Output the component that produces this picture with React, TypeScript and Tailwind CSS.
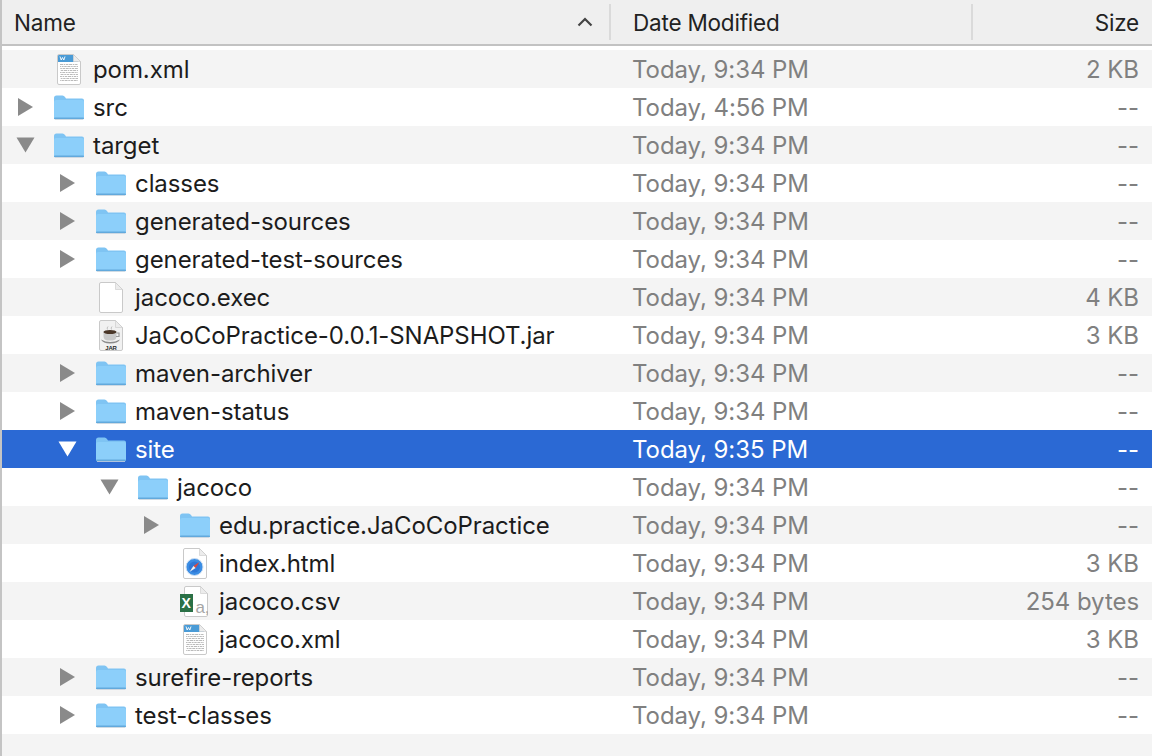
import React from 'react';

type Kind = 'folder' | 'word' | 'blank' | 'jar' | 'safari' | 'excel';

interface Item {
  name: string;
  date: string;
  size: string;
  depth: 0 | 1 | 2 | 3;
  kind: Kind;
  toggle?: 'open' | 'closed';
  selected?: boolean;
}

const items: Item[] = [
  { name: 'pom.xml', date: 'Today, 9:34 PM', size: '2 KB', depth: 0, kind: 'word' },
  { name: 'src', date: 'Today, 4:56 PM', size: '--', depth: 0, kind: 'folder', toggle: 'closed' },
  { name: 'target', date: 'Today, 9:34 PM', size: '--', depth: 0, kind: 'folder', toggle: 'open' },
  { name: 'classes', date: 'Today, 9:34 PM', size: '--', depth: 1, kind: 'folder', toggle: 'closed' },
  { name: 'generated-sources', date: 'Today, 9:34 PM', size: '--', depth: 1, kind: 'folder', toggle: 'closed' },
  { name: 'generated-test-sources', date: 'Today, 9:34 PM', size: '--', depth: 1, kind: 'folder', toggle: 'closed' },
  { name: 'jacoco.exec', date: 'Today, 9:34 PM', size: '4 KB', depth: 1, kind: 'blank' },
  { name: 'JaCoCoPractice-0.0.1-SNAPSHOT.jar', date: 'Today, 9:34 PM', size: '3 KB', depth: 1, kind: 'jar' },
  { name: 'maven-archiver', date: 'Today, 9:34 PM', size: '--', depth: 1, kind: 'folder', toggle: 'closed' },
  { name: 'maven-status', date: 'Today, 9:34 PM', size: '--', depth: 1, kind: 'folder', toggle: 'closed' },
  { name: 'site', date: 'Today, 9:35 PM', size: '--', depth: 1, kind: 'folder', toggle: 'open', selected: true },
  { name: 'jacoco', date: 'Today, 9:34 PM', size: '--', depth: 2, kind: 'folder', toggle: 'open' },
  { name: 'edu.practice.JaCoCoPractice', date: 'Today, 9:34 PM', size: '--', depth: 3, kind: 'folder', toggle: 'closed' },
  { name: 'index.html', date: 'Today, 9:34 PM', size: '3 KB', depth: 3, kind: 'safari' },
  { name: 'jacoco.csv', date: 'Today, 9:34 PM', size: '254 bytes', depth: 3, kind: 'excel' },
  { name: 'jacoco.xml', date: 'Today, 9:34 PM', size: '3 KB', depth: 3, kind: 'word' },
  { name: 'surefire-reports', date: 'Today, 9:34 PM', size: '--', depth: 1, kind: 'folder', toggle: 'closed' },
  { name: 'test-classes', date: 'Today, 9:34 PM', size: '--', depth: 1, kind: 'folder', toggle: 'closed' },
];

const indent = ['pl-[14px]', 'pl-[56px]', 'pl-[98px]', 'pl-[140px]'];

const Toggle = ({ state, selected }: { state?: 'open' | 'closed'; selected?: boolean }) => {
  const fill = selected ? '#ffffff' : '#8a8a8a';
  return (
    <div className="w-[38px] h-[38px] shrink-0 flex items-center">
      {state === 'closed' && (
        <svg width="19" height="18" viewBox="0 0 19 18" className="block">
          <path d="M2 0 L17 9 L2 18 Z" fill={fill} />
        </svg>
      )}
      {state === 'open' && (
        <svg width="19" height="16" viewBox="0 0 19 16" className="block mt-[-1px]">
          <path d="M0.5 0.5 H18.5 L9.5 15.5 Z" fill={fill} />
        </svg>
      )}
    </div>
  );
};

const FolderIcon = () => (
  <svg width="30" height="25" viewBox="0 0 30 25" className="block">
    <path d="M0 3 Q0 0.5 2.5 0.5 H8.5 Q10 0.5 11 2 L12 3.5 H28 Q30 3.5 30 5.5 V22.5 Q30 24 28 24 H2 Q0 24 0 22.5 Z" fill="#7fc4f3" />
    <path d="M0 6.5 Q0 5 2 5 H28 Q30 5 30 6.5 V22.5 Q30 24 28 24 H2 Q0 24 0 22.5 Z" fill="#8ccffa" />
    <rect x="0" y="22.6" width="30" height="1.6" rx="0.8" fill="#62a9dc" />
    <rect x="1" y="24.2" width="28" height="0.8" fill="#cfd8df" />
  </svg>
);

const Page = ({ children, fill = '#ffffff' }: { children?: React.ReactNode; fill?: string }) => (
  <svg width="24" height="31" viewBox="0 0 24 31" className="block">
    <path d="M0.5 2 Q0.5 0.5 2 0.5 H16.5 L23.5 7.5 V29 Q23.5 30.5 22 30.5 H2 Q0.5 30.5 0.5 29 Z" fill={fill} stroke="#c9c9c9" />
    {children}
    <path d="M16.5 0.5 V7.5 H23.5 Z" fill="#ececec" stroke="#c9c9c9" strokeWidth="0.6" />
  </svg>
);

const wordLines = [10.5, 12.5, 14.5, 16.5, 18.5, 20.5, 22.5, 24.5, 26.5];

const FileIcon = ({ kind }: { kind: Kind }) => {
  if (kind === 'folder') return <FolderIcon />;
  if (kind === 'blank') return <Page />;
  if (kind === 'word') {
    return (
      <Page>
        <path d="M1 2 Q1 1 2 1 H16.5 V7.5 H21 L21 8 H1 Z" fill="#4a9bd6" />
        <path d="M3 2.5 L4.2 6 L5.5 3.5 L6.8 6 L8 2.5" fill="none" stroke="#ffffff" strokeWidth="0.9" />
        {wordLines.map((y, i) => (
          <path key={y} d={`M3 ${y} H21`} stroke="#b2b2b2" strokeWidth="0.9" strokeDasharray="3 0.7 1.6 0.7 2.4 0.7" strokeDashoffset={i * 1.7} />
        ))}
      </Page>
    );
  }
  if (kind === 'jar') {
    return (
      <Page fill="#f1f1f1">
        <path d="M4.5 11.5 H17.5 V16 Q17.5 20 13.5 20.5 H8.5 Q4.5 20 4.5 16 Z" fill="#c9c9c9" />
        <ellipse cx="11" cy="12" rx="6.5" ry="2" fill="#4a3628" />
        <path d="M17.5 13 H20 V16.5 H17" fill="none" stroke="#9a9a9a" strokeWidth="1.2" />
        <path d="M2 19.5 Q11 24.5 21 19.5 Q19 23.5 11 23.5 Q4 23.5 2 19.5 Z" fill="#8a8a8a" />
        <path d="M8.5 9.5 Q7.5 8 9 6.5 M12.5 9.5 Q11.5 8 13 6.5" fill="none" stroke="#c0c0c0" strokeWidth="1" />
        <text x="12" y="30" textAnchor="middle" fontSize="6" fontWeight="700" fontFamily="'Liberation Sans', sans-serif" fill="#2a2a2a">JAR</text>
      </Page>
    );
  }
  if (kind === 'safari') {
    return (
      <Page>
        <circle cx="11.5" cy="19" r="8.5" fill="#3b8de4" stroke="#cddff2" strokeWidth="1" />
        <circle cx="11.5" cy="19" r="5.5" fill="#2f78d6" />
        <path d="M16.5 14 L12.6 20.1 L10.4 17.9 Z" fill="#e0483c" />
        <path d="M6.5 24 L10.4 17.9 L12.6 20.1 Z" fill="#f2f2f2" />
      </Page>
    );
  }
  return (
    <div className="relative w-[28px] h-[31px] ml-[-3px]">
      <div className="absolute left-[4px] top-0">
        <Page>
          <text x="11.5" y="27" fontSize="17" fontFamily="'Liberation Sans', sans-serif" fill="#a6a6a6">a,</text>
        </Page>
      </div>
      <div className="absolute left-0 top-[8px] w-[13px] h-[18px] bg-[#2a7046] flex items-center justify-center text-white text-[14px] font-bold font-['Liberation_Sans',sans-serif] leading-none">
        X
      </div>
    </div>
  );
};

const Row = ({ item, index }: { item: Item; index: number }) => {
  const stripe = index % 2 === 0 ? 'bg-[#f4f4f4]' : 'bg-white';
  return (
    <div className={`flex h-[38px] items-center text-[24px] leading-[36px] ${item.selected ? 'bg-[#2b69d4] text-white' : `${stripe} text-[#808080]`}`}>
      <div className={`w-[630px] shrink-0 flex items-center ${indent[item.depth]}`}>
        <Toggle state={item.toggle} selected={item.selected} />
        <div className="w-[39px] shrink-0 h-[38px] flex items-center">
          <div className="w-[30px] flex justify-center">
            <FileIcon kind={item.kind} />
          </div>
        </div>
        <span className={`whitespace-nowrap pt-[2px] tracking-[-0.08px] ${item.selected ? 'text-white' : 'text-[#1c1c1c]'}`}>{item.name}</span>
      </div>
      <div className="flex-1 whitespace-nowrap pt-[2px] tracking-[-0.06px]">{item.date}</div>
      <div className="pr-[13px] whitespace-nowrap pt-[2px] tracking-[-0.06px]">{item.size}</div>
    </div>
  );
};

export default function App() {
  return (
    <div className="w-[1152px] h-[756px] overflow-hidden bg-[#f4f4f4] border-l-2 border-[#c4c4c4] box-border flex flex-col font-['Inter','Liberation_Sans',sans-serif] tracking-[-0.2px]">
      <div className="h-[46px] shrink-0 bg-[#efefef] border-b-2 border-[#c2c2c2] flex items-center text-[22.5px] text-[#222222]">
        <div className="w-[609px] h-[36px] shrink-0 border-r-2 border-[#dadada] flex items-center justify-between pl-[12px] pr-[16px]">
          <span className="pt-[2px]">Name</span>
          <svg width="16" height="10" viewBox="0 0 16 10" className="block">
            <path d="M1.5 8.5 L8 2 L14.5 8.5" fill="none" stroke="#444444" strokeWidth="2.2" />
          </svg>
        </div>
        <div className="w-[362px] h-[36px] shrink-0 border-r-2 border-[#dadada] flex items-center pl-[22px] pt-[2px]">Date Modified</div>
        <div className="flex-1 text-right pr-[13px] pt-[2px]">Size</div>
      </div>
      <div className="h-[4px] shrink-0 bg-white" />
      <div className="flex flex-col">
        {items.map((item, i) => (
          <Row key={item.name} item={item} index={i} />
        ))}
      </div>
    </div>
  );
}
